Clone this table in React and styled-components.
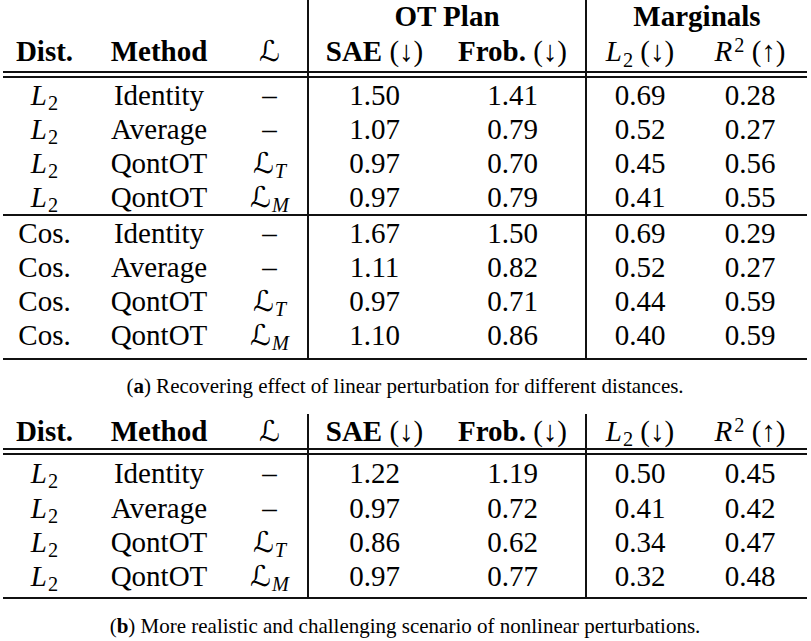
import React from "react";
import styled, { createGlobalStyle } from "styled-components";

const GlobalStyle = createGlobalStyle`
  html, body {
    margin: 0;
    background: #fff;
  }
`;

const Page = styled.div`
  width: 811px;
  height: 641px;
  padding: 0 4px 0 3px;
  box-sizing: border-box;
  font-family: "Liberation Serif", "Times New Roman", serif;
  color: #000;
  overflow: hidden;
`;

const Table = styled.table`
  width: 804px;
  border-collapse: collapse;
  table-layout: fixed;
  font-size: 29px;
`;

const Row = styled.tr`
  border-top: ${props => (props.$rule ? "2px solid #111" : "none")};
  border-bottom: ${props => (props.$under ? "2px solid #111" : "none")};
  font-size: ${props => (props.$gap ? "0" : "inherit")};
`;

const Cell = styled.td`
  height: ${props => props.$h || 34}px;
  padding: 0;
  text-align: center;
  vertical-align: middle;
  white-space: nowrap;
  line-height: 1;
  border-left: ${props => (props.$line ? "2px solid #111" : "none")};
`;

const Bold = styled.b`
  font-weight: 700;
`;

const Math = styled.i`
  font-style: italic;
`;

const Sub = styled.span`
  font-size: 0.7em;
  position: relative;
  top: 0.28em;
  margin-left: 1px;
`;

const Sup = styled.span`
  font-size: 0.7em;
  position: relative;
  top: -0.42em;
  margin-left: 2px;
`;

const Script = styled.span`
  font-family: "DejaVu Serif", "DejaVu Sans", serif;
  font-style: italic;
`;

const Caption = styled.div`
  height: ${props => props.$h}px;
  display: flex;
  align-items: center;
  justify-content: center;
  font-size: 21px;
`;

const widths = [83, 146, 76, 132, 146, 107, 114];

const tableA = [
  ["L2", "Identity", "", "1.50", "1.41", "0.69", "0.28"],
  ["L2", "Average", "", "1.07", "0.79", "0.52", "0.27"],
  ["L2", "QontOT", "T", "0.97", "0.70", "0.45", "0.56"],
  ["L2", "QontOT", "M", "0.97", "0.79", "0.41", "0.55"],
  ["Cos.", "Identity", "", "1.67", "1.50", "0.69", "0.29"],
  ["Cos.", "Average", "", "1.11", "0.82", "0.52", "0.27"],
  ["Cos.", "QontOT", "T", "0.97", "0.71", "0.44", "0.59"],
  ["Cos.", "QontOT", "M", "1.10", "0.86", "0.40", "0.59"],
];

const tableB = [
  ["L2", "Identity", "", "1.22", "1.19", "0.50", "0.45"],
  ["L2", "Average", "", "0.97", "0.72", "0.41", "0.42"],
  ["L2", "QontOT", "T", "0.86", "0.62", "0.34", "0.47"],
  ["L2", "QontOT", "M", "0.97", "0.77", "0.32", "0.48"],
];

const L2 = () => (
  <span>
    <Math>L</Math>
    <Sub>2</Sub>
  </span>
);

const Loss = ({ sub }) =>
  sub ? (
    <span>
      <Script>ℒ</Script>
      <Sub>
        <Math>{sub}</Math>
      </Sub>
    </span>
  ) : (
    "–"
  );

const Cols = () => (
  <colgroup>
    {widths.map((w, i) => (
      <col key={i} style={{ width: w }} />
    ))}
  </colgroup>
);

const HeaderRow = ({ h }) => (
  <Row $under>
    <Cell $h={h}>
      <Bold>Dist.</Bold>
    </Cell>
    <Cell $h={h}>
      <Bold>Method</Bold>
    </Cell>
    <Cell $h={h}>
      <Script>ℒ</Script>
    </Cell>
    <Cell $h={h} $line>
      <Bold>SAE</Bold> (↓)
    </Cell>
    <Cell $h={h}>
      <Bold>Frob.</Bold> (↓)
    </Cell>
    <Cell $h={h} $line>
      <L2 /> (↓)
    </Cell>
    <Cell $h={h}>
      <Math>R</Math>
      <Sup>2</Sup> (↑)
    </Cell>
  </Row>
);

// empty strip that keeps the two vertical rules running
const GapRow = ({ h = 3 }) => (
  <Row $gap>
    {widths.map((w, i) => (
      <Cell key={i} $h={h} $line={i === 3 || i === 5} />
    ))}
  </Row>
);

const DataRow = ({ row, rule, h }) => (
  <Row $rule={rule}>
    <Cell $h={h}>{row[0] === "L2" ? <L2 /> : row[0]}</Cell>
    <Cell $h={h}>{row[1]}</Cell>
    <Cell $h={h}>
      <Loss sub={row[2]} />
    </Cell>
    <Cell $h={h} $line>
      {row[3]}
    </Cell>
    <Cell $h={h}>{row[4]}</Cell>
    <Cell $h={h} $line>
      {row[5]}
    </Cell>
    <Cell $h={h}>{row[6]}</Cell>
  </Row>
);

export default function App() {
  return (
    <Page>
      <GlobalStyle />
      <Table>
        <Cols />
        <tbody>
          <Row>
            <Cell $h={32} />
            <Cell $h={32} />
            <Cell $h={32} />
            <Cell $h={32} colSpan={2} $line>
              <Bold>OT Plan</Bold>
            </Cell>
            <Cell $h={32} colSpan={2} $line>
              <Bold>Marginals</Bold>
            </Cell>
          </Row>
          <HeaderRow h={39} />
          <GapRow />
          {tableA.map((row, i) => (
            <DataRow key={i} row={row} rule={i === 0 || i === 4} h={34} />
          ))}
          <GapRow h={6} />
          <Row $rule />
        </tbody>
      </Table>
      <Caption $h={55}>
        <span>
          (<Bold>a</Bold>) Recovering effect of linear perturbation for different distances.
        </span>
      </Caption>
      <Table>
        <Cols />
        <tbody>
          <HeaderRow h={34} />
          <GapRow />
          {tableB.map((row, i) => (
            <DataRow key={i} row={row} rule={i === 0} h={i === 0 ? 36 : 34} />
          ))}
          <GapRow h={4} />
          <Row $rule />
        </tbody>
      </Table>
      <Caption $h={56}>
        <span>
          (<Bold>b</Bold>) More realistic and challenging scenario of nonlinear perturbations.
        </span>
      </Caption>
    </Page>
  );
}
